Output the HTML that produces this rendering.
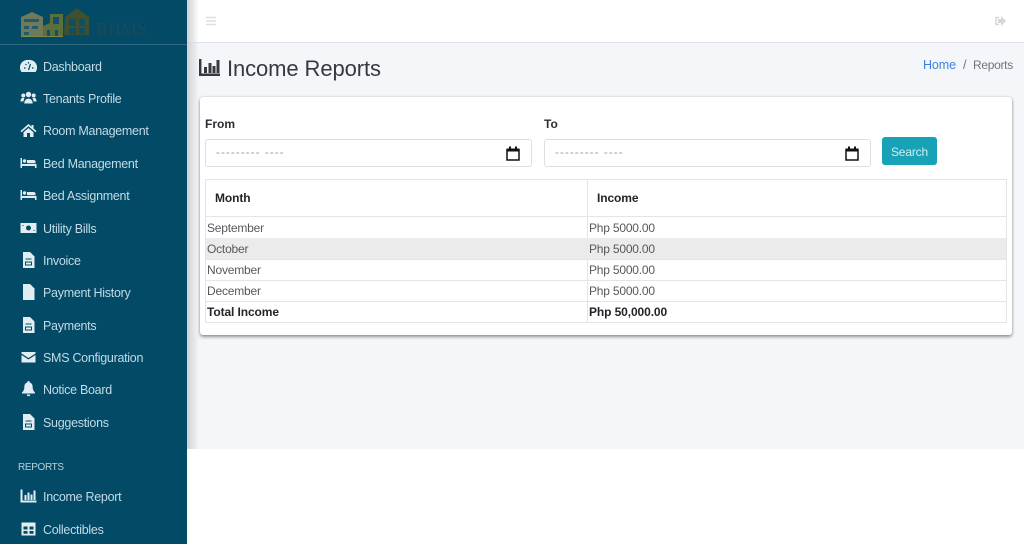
<!DOCTYPE html>
<html><head><meta charset="utf-8"><title>Income Reports</title>
<style>
html,body{margin:0;padding:0;background:#fff}
body{width:1024px;height:546px;overflow:hidden;position:relative;font-family:"Liberation Sans",sans-serif;color:#212529}
.a{position:absolute}
#side{left:0;top:0;width:187px;height:544px;background:#024a66;z-index:5;overflow:hidden}
#main{left:187px;top:0;width:837px;height:449px;background:#f4f6f9}
#sh{left:187px;top:0;width:12px;height:449px;background:linear-gradient(90deg,#cfd1d3,rgba(244,246,249,0));z-index:4}
#nav{left:187px;top:0;width:837px;height:42px;background:#fff;border-bottom:1px solid #dee2e6}
.m{position:absolute;left:43px;margin-top:1px;font-size:12.500px;letter-spacing:-.28px;line-height:16px;color:#c2dbe6;white-space:nowrap}
.i{position:absolute;left:20px;width:17px;height:16px;fill:#e2edf1}
#card{left:200px;top:97px;width:812px;height:238px;background:#fff;border-radius:3px;box-shadow:0 2px 3px rgba(0,0,0,.38),0 0 2px rgba(0,0,0,.18)}
.lb{font-weight:bold;font-size:12px;line-height:16px;color:#2a2e33}
.inp{box-sizing:border-box;width:327px;height:28px;background:#fff;border:1px solid #dcdfe3;border-radius:3px;top:139px}
.ph{position:absolute;left:10px;top:4px;font-size:12px;letter-spacing:.95px;line-height:16px;color:#9a9ea3;white-space:pre}
.cal{position:absolute;right:11px;top:6px;width:14px;height:15px}
.b{position:absolute;background:#e3e5e8}
.t{position:absolute;font-size:12px;letter-spacing:-.2px;line-height:16px;color:#55595e;white-space:nowrap}
.t.s{font-weight:bold;color:#212529;letter-spacing:-.1px}
</style></head><body>
<div id="main" class="a"></div>
<div id="nav" class="a"></div>
<div id="sh" class="a"></div>
<svg class="a" style="left:206px;top:16px" width="11" height="10"><path d="M0 1.500h10M0 5h10M0 8.500h10" stroke="#dcdfe2" stroke-width="1.500"/></svg>
<svg class="a" style="left:994px;top:15px" width="13" height="12"><path d="M5 2.500H2v7h3" fill="none" stroke="#d5d7d9" stroke-width="1.500"/><path d="M7 1l5 5-5 5V8H4V4h3z" fill="#d5d7d9"/></svg>

<svg class="a" style="left:199px;top:58px" width="22" height="19"><path d="M1.200 1v15.800H21" fill="none" stroke="#343a40" stroke-width="2.500"/><path d="M5 9h3v6H5zM9.500 5h3v10h-3zM13.500 8h3v7h-3zM17.500 2h3v13h-3z" fill="#343a40"/></svg>
<div class="a" style="left:227px;top:54px;font-size:22px;letter-spacing:-.1px;line-height:30px;color:#343a40;white-space:nowrap">Income Reports</div>
<div class="a" style="left:923px;top:57px;font-size:12.500px;letter-spacing:-.1px;line-height:16px;color:#3b82e0;white-space:nowrap">Home</div>
<div class="a" style="left:963px;top:57px;font-size:12.500px;line-height:16px;color:#6c757d;white-space:nowrap">/</div>
<div class="a" style="left:973px;top:57px;font-size:12px;letter-spacing:-.3px;line-height:16px;color:#6c757d;white-space:nowrap">Reports</div>

<div id="card" class="a"></div>
<div class="a lb" style="left:205px;top:116px">From</div>
<div class="a lb" style="left:544px;top:116px">To</div>
<div class="a inp" style="left:205px"><span class="ph">--------- ----</span><svg class="cal" viewBox="0 0 14 15"><path d="M1 3.500h12v10.500H1z" fill="none" stroke="#111" stroke-width="1.500"/><path d="M1 2.500h12v3H1zM3 .5h2v3H3zM9 .5h2v3H9z" fill="#111"/></svg></div>
<div class="a inp" style="left:544px"><span class="ph">--------- ----</span><svg class="cal" viewBox="0 0 14 15"><path d="M1 3.500h12v10.500H1z" fill="none" stroke="#111" stroke-width="1.500"/><path d="M1 2.500h12v3H1zM3 .5h2v3H3zM9 .5h2v3H9z" fill="#111"/></svg></div>
<div class="a" style="left:882px;top:137px;width:55px;height:28px;background:#17a2b8;border-radius:3px;color:#cfeef3;font-size:12px;letter-spacing:-.15px;line-height:30px;text-align:center">Search</div>

<div class="b" style="left:205px;top:179px;width:802px;height:1px"></div>
<div class="b" style="left:205px;top:216px;width:802px;height:1px"></div>
<div class="b" style="left:205px;top:259px;width:802px;height:1px"></div>
<div class="b" style="left:205px;top:280px;width:802px;height:1px"></div>
<div class="b" style="left:205px;top:301px;width:802px;height:1px"></div>
<div class="b" style="left:205px;top:322px;width:802px;height:1px"></div>
<div class="b" style="left:205px;top:179px;width:1px;height:144px"></div>
<div class="b" style="left:587px;top:179px;width:1px;height:144px"></div>
<div class="b" style="left:1006px;top:179px;width:1px;height:144px"></div>
<div class="a" style="left:206px;top:238px;width:800px;height:21px;background:#ebebeb"></div>
<div class="t s" style="left:215px;top:190px">Month</div>
<div class="t s" style="left:597px;top:190px">Income</div>
<div class="t" style="left:207px;top:220px">September</div><div class="t" style="left:589px;top:220px">Php 5000.00</div>
<div class="t" style="left:207px;top:241px">October</div><div class="t" style="left:589px;top:241px">Php 5000.00</div>
<div class="t" style="left:207px;top:262px">November</div><div class="t" style="left:589px;top:262px">Php 5000.00</div>
<div class="t" style="left:207px;top:283px">December</div><div class="t" style="left:589px;top:283px">Php 5000.00</div>
<div class="t s" style="left:207px;top:304px">Total Income</div><div class="t s" style="left:589px;top:304px">Php 50,000.00</div>

<div id="side" class="a">
<div class="a" style="left:0;top:44px;width:187px;height:1px;background:#2c6680"></div>
<svg class="a" style="left:20px;top:7px" width="130" height="31" viewBox="0 0 130 31">
<path d="M1 10l11-5 11 5v20H1z" fill="#707a5a"/>
<path d="M4 12h15v3H4zM4 19h5v3H4zM12 19h6v3h-6zM4 25h5v3H4z" fill="#1f5c6c"/>
<path d="M23 30V19l7-3V7h13v23z" fill="#5a6f3d"/>
<path d="M33 10h6v7h-6zM27 23h3v7h-3zM35 23h3v7h-3z" fill="#11506a"/>
<path d="M45 10L57 1l12 9v18H44z" fill="#3f4f30"/>
<path d="M49 12h7v7h-7zM59 12h6v7h-6zM49 21h7v6h-7zM59 21h6v6h-6z" fill="#0f4f66"/>
<path d="M1 29h42v1H1z" fill="#7a8a4a"/>
<text x="76" y="28" font-family="Liberation Serif,serif" font-size="18" fill="#1e4a55">BHMS</text>
</svg>

<svg class="i" style="top:58px" viewBox="0 0 16 16"><path d="M8 2A7.500 7.500 0 0 0 1 14h14A7.500 7.500 0 0 0 8 2z"/><path d="M8 12l2-6M3.500 10h1.500M11.500 10H13M8 4v1.500M5 6l1 1" stroke="#004a68" stroke-width="1.200"/></svg>
<div class="m" style="top:58px">Dashboard</div>

<svg class="i" style="top:90px" viewBox="0 0 16 16"><circle cx="8" cy="4.500" r="2.700"/><circle cx="2.800" cy="5.500" r="2"/><circle cx="13.200" cy="5.500" r="2"/><path d="M3.800 13.500c0-6.500 8.400-6.500 8.400 0zM0 11.500c0-3.500 2-4 4-3.300l-1.200 3.300zM16 11.500c0-3.500-2-4-4-3.300l1.200 3.300z"/></svg>
<div class="m" style="top:90px">Tenants Profile</div>

<svg class="i" style="top:122px" viewBox="0 0 16 16"><path d="M8 2L0 9l1 1.200L8 4.300l7 5.900L16 9l-3-2.600V3h-2v1.700z"/><path d="M3 10.200L8 6l5 4.200V15H9.500v-4h-3v4H3z"/></svg>
<div class="m" style="top:122px">Room Management</div>

<svg class="i" style="top:155px" viewBox="0 0 16 16"><path d="M0 3h1.500v6H16v4h-1.500v-2h-13v2H0z"/><circle cx="4" cy="6" r="1.700"/><path d="M6.500 5h6.500a2 2 0 0 1 2 2v1.200H6.500z"/></svg>
<div class="m" style="top:155px">Bed Management</div>

<svg class="i" style="top:187px" viewBox="0 0 16 16"><path d="M0 3h1.500v6H16v4h-1.500v-2h-13v2H0z"/><circle cx="4" cy="6" r="1.700"/><path d="M6.500 5h6.500a2 2 0 0 1 2 2v1.200H6.500z"/></svg>
<div class="m" style="top:187px">Bed Assignment</div>

<svg class="i" style="top:220px" viewBox="0 0 16 16"><path d="M0 3h16v10H0z"/><circle cx="8" cy="8" r="2.500" fill="#004a68"/><path d="M2 5h1v1H2zM13 10h1v1h-1z" fill="#004a68"/></svg>
<div class="m" style="top:220px">Utility Bills</div>

<svg class="i" style="top:252px" viewBox="0 0 16 16"><path d="M2.500 0h7L14 4.500V16H2.500z"/><path d="M5 7h6M5 10h6v3H5z" fill="none" stroke="#004a68"/></svg>
<div class="m" style="top:252px">Invoice</div>

<svg class="i" style="top:284px" viewBox="0 0 16 16"><path d="M2.500 0h7L14 4.500V16H2.500z"/></svg>
<div class="m" style="top:284px">Payment History</div>

<svg class="i" style="top:317px" viewBox="0 0 16 16"><path d="M2.500 0h7L14 4.500V16H2.500z"/><path d="M5 7h6M5 10h6v3H5z" fill="none" stroke="#004a68"/></svg>
<div class="m" style="top:317px">Payments</div>

<svg class="i" style="top:349px" viewBox="0 0 16 16"><path d="M1 3h14v1.500L8 9 1 4.500zM1 6l7 4.500L15 6v7.500H1z"/></svg>
<div class="m" style="top:349px">SMS Configuration</div>

<svg class="i" style="top:381px" viewBox="0 0 16 16"><path d="M8 0a1.200 1.200 0 0 1 1.200 1.500c2.500.6 3 2.800 3 5.200 0 2 1 3.500 2.300 4.800v1H1.500v-1c1.300-1.300 2.300-2.800 2.300-4.800 0-2.400.5-4.600 3-5.200A1.200 1.200 0 0 1 8 0zM6.300 13.500h3.400a1.700 1.700 0 0 1-3.400 0z"/></svg>
<div class="m" style="top:381px">Notice Board</div>

<svg class="i" style="top:414px" viewBox="0 0 16 16"><path d="M2.500 0h7L14 4.500V16H2.500z"/><path d="M5 7h6M5 10h6v3H5z" fill="none" stroke="#004a68"/></svg>
<div class="m" style="top:414px">Suggestions</div>

<div class="a" style="left:18px;top:461px;font-size:10px;letter-spacing:-.35px;line-height:14px;color:#b5d0dc">REPORTS</div>

<svg class="i" style="top:488px" viewBox="0 0 16 16"><path d="M1 1.500v12h15" fill="none" stroke="#e2edf1" stroke-width="2"/><path d="M4 7h2v5H4zM7 4.500h2V12H7zM10 6.500h2V12h-2zM13 2.500h2V12h-2z"/></svg>
<div class="m" style="top:488px">Income Report</div>

<svg class="i" style="top:521px" viewBox="0 0 16 16"><path d="M1 1.500h14v13H1z"/><path d="M3 5.500h4v3H3zM9 5.500h4v3H9zM3 10h4v2.800H3zM9 10h4v2.800H9z" fill="#004a68"/></svg>
<div class="m" style="top:521px">Collectibles</div>
</div>
</body></html>
